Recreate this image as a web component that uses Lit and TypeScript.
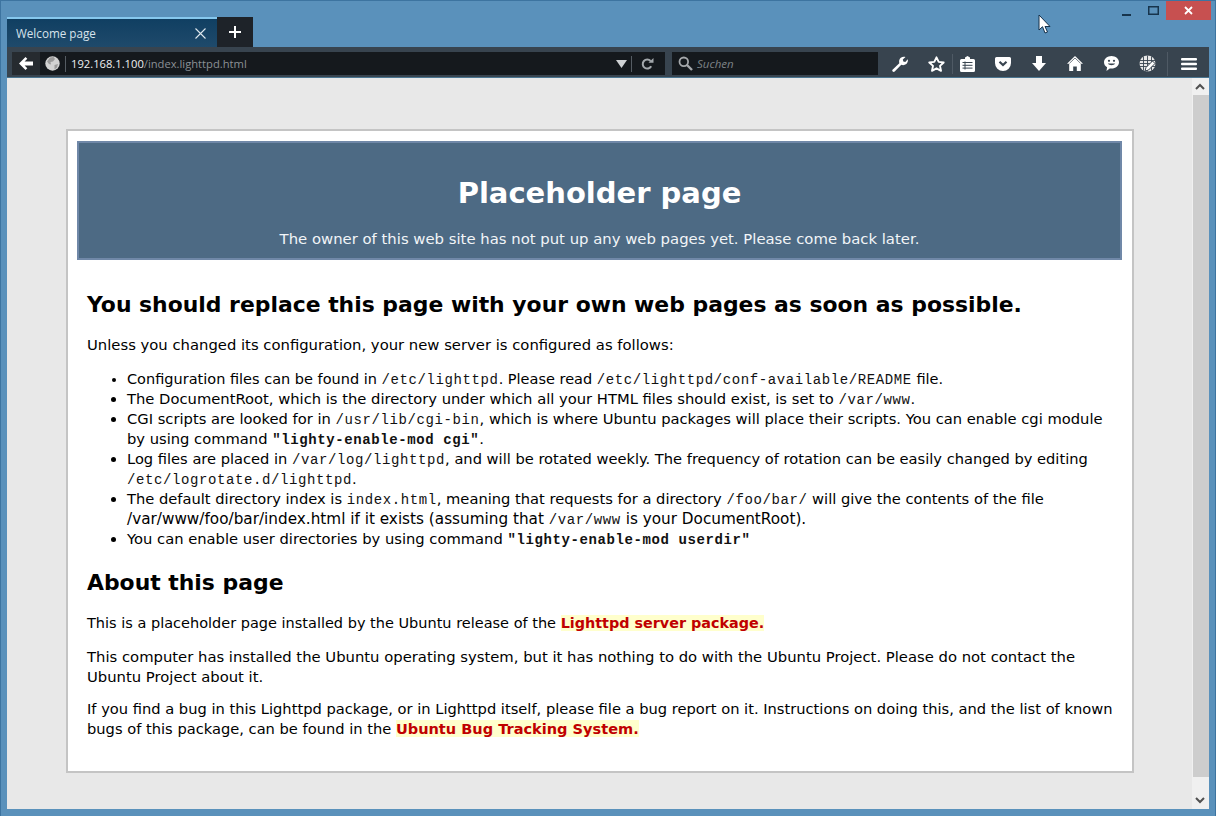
import { LitElement, html, css, svg } from "lit";
import { customElement } from "lit/decorators.js";

const icon = (w: number, h: number, vb: string, body: unknown) =>
  html`<svg width=${w} height=${h} viewBox=${vb}>${body}</svg>`;

@customElement("app-root")
export class AppRoot extends LitElement {
  static styles = css`
    :host { display: block; width: 1216px; height: 816px; overflow: hidden; position: relative; }
    * { box-sizing: border-box; }
    .window { width: 1216px; height: 816px; background: #5a91bb; border: 1px solid #3d74a0; border-width: 1px 1px 0 1px; display: flex; flex-direction: column; padding: 0 6px 7px 6px; position: relative; font-family: "DejaVu Sans", sans-serif; }
    .titlebar { height: 16px; display: flex; justify-content: flex-end; flex: none; margin-right: -2px; }
    .winctl { display: flex; height: 19px; align-items: flex-start; }
    .winbtn { width: 26px; height: 19px; display: flex; align-items: center; justify-content: center; }
    .winbtn.min { width: 27px; padding-top: 7px; }
    .winbtn.close { width: 45px; background: #c75050; }
    .tabs { display: flex; height: 30px; flex: none; }
    .tab { width: 210px; background: linear-gradient(#103f62, #1f4a6b); border-top: 2px solid #86c8ee; display: flex; align-items: center; justify-content: space-between; padding: 0 11px 0 9px; color: #d7e3ec; font: 11.7px "Open Sans", "DejaVu Sans", sans-serif; }
    .newtab { width: 36px; background: #1e2329; display: flex; align-items: center; justify-content: center; }
    .toolbar { height: 31px; flex: none; background: #38444f; display: flex; align-items: center; padding: 3px 0 0 5px; border-bottom: 1px solid #4a7590; }
    .urlbar { width: 653px; height: 23px; background: #15191d; display: flex; align-items: center; flex: none; }
    .back { width: 28px; height: 23px; background: #262b30; display: flex; align-items: center; justify-content: center; }
    .globe { width: 25px; display: flex; align-items: center; justify-content: center; }
    .sep { width: 1px; height: 16px; background: #555c63; flex: none; }
    .url { flex: 1; padding-left: 5px; font: 11.2px "Open Sans", sans-serif; color: #eef0f2; white-space: nowrap; }
    .url span { color: #8b9095; }
    .urlend { display: flex; align-items: center; }
    .drop { width: 20px; display: flex; justify-content: center; }
    .reload { width: 33px; padding-right: 3px; display: flex; justify-content: center; }
    .search { width: 206px; margin-left: 7px; height: 23px; background: #15191d; display: flex; align-items: center; padding-left: 6px; gap: 4px; flex: none; color: #7d8286; font: italic 11.5px "Open Sans", sans-serif; }
    .tools { flex: 1; display: flex; align-items: center; padding-left: 4px; height: 100%; }
    .tool { width: 36px; display: flex; justify-content: center; align-items: center; flex: none; }
    .tool.star { width: 34px; padding-left: 2px; }
    .tool.clip { width: 28px; margin-right: 4px; }
    .tool.menu { width: 41px; }
    .tools .sep { height: 20px; background: #4f5a65; }
    .tools .sep.end { margin-left: 2px; height: 24px; }
    .content { flex: 1; min-height: 0; display: flex; background: #e8e8e8; }
    .page { flex: 1; padding: 51px 0 0 59px; min-width: 0; }
    .scroll { width: 17px; flex: none; background: #f0f0f0; display: flex; flex-direction: column; align-items: center; padding-right: 1px; }
    .sbtn { height: 17px; display: flex; align-items: center; justify-content: center; flex: none; }
    .thumb { flex: 1; width: 100%; background: #cdcdcd; margin-bottom: 15px; margin-left: 1px; }
    .card { width: 1068px; height: 644px; background: #fff; border: 2px solid #c4c4c4; padding: 10px 10px 10px 9px; color: #000; font-size: 14.8px; line-height: 20px; }
    .banner { height: 119px; background: #4d6a84; border: 2px solid #7088a8; text-align: center; color: #fff; padding-top: 32px; }
    .banner h1 { margin: 0; font-size: 29px; line-height: 36px; font-weight: bold; }
    .banner p { margin: 0; padding-top: 18px; color: #f2f5f8; font-size: 14.85px; }
    .main { padding: 0 10px; }
    h2 { margin: 0; font-size: 21.9px; font-weight: bold; line-height: 26px; }
    h2.first { padding-top: 32px; }
    h2.second { padding-top: 21px; }
    p { margin: 0; }
    .lead { padding-top: 17px; }
    ul { margin: 14px 0 0; padding: 0 0 0 40px; }
    .l1 { font-size: 14.5px; }
    .l2 { font-size: 14.74px; }
    .l3 { font-size: 14.71px; }
    .l4 { font-size: 14.65px; }
    .l5 { font-size: 14.68px; }
    .l6 { font-size: 14.72px; }
    .wide { font-size: 15.25px; }
    code { font-family: "Liberation Mono", monospace; font-size: 14px; letter-spacing: 0.6px; line-height: 0; color: #111; }
    code.b { font-weight: bold; }
    a { color: #c00000; font-weight: bold; background: #ffffcc; text-decoration: none; font-size: 14.36px; }
    a.a2 { font-size: 14.55px; }
    .p1 { padding-top: 17px; font-size: 14.5px; }
    .p2 { padding-top: 14px; }
    .p3 { padding-top: 12px; font-size: 14.66px; margin-right: -5px; }
    .cursor { position: absolute; left: 1037px; top: 13px; }
  `;

  render() {
    const w = "#fff";
    const bg = "#38444f";
    return html`<div class="window">
      <div class="titlebar"><div class="winctl">
        <div class="winbtn min">${icon(9, 3, "0 0 9 3", svg`<rect width="9" height="2" y="1" fill="#17344c"/>`)}</div>
        <div class="winbtn">${icon(11, 9, "0 0 11 9", svg`<rect x=".75" y=".75" width="9.5" height="7.5" fill="none" stroke="#17344c" stroke-width="1.5"/>`)}</div>
        <div class="winbtn close">${icon(9, 9, "0 0 9 9", svg`<path d="M1 1l7 7M8 1L1 8" stroke="#fff" stroke-width="1.8"/>`)}</div>
      </div></div>
      <div class="tabs">
        <div class="tab"><span>Welcome page</span>${icon(11, 11, "0 0 11 11", svg`<path d="M.5.5l10 10M10.5.5l-10 10" stroke="#dfe8ee" stroke-width="1.1"/>`)}</div>
        <div class="newtab">${icon(12, 12, "0 0 12 12", svg`<path d="M6 0v12M0 6h12" stroke="#fff" stroke-width="2"/>`)}</div>
      </div>
      <div class="toolbar">
        <div class="urlbar">
          <div class="back">${icon(14, 13, "0 0 14 13", svg`<path d="M6.500 0L0 6.500 6.500 13l1.800-1.800-2.700-2.700H14v-4H5.600l2.700-2.700z" fill="${w}"/>`)}</div>
          <div class="globe">${icon(15, 15, "0 0 15 15", svg`<circle cx="7.500" cy="7.500" r="7.200" fill="#d2d2d2"/><path d="M5 1.500l3.500-.5 1.500 2-2 2.500-2.500.5.500 2.500-2-.5L2 5.500zM9.500 9l3.500-1-1 3.500-2.500 2z" fill="#9a9a9a"/>`)}</div>
          <div class="sep"></div>
          <div class="url">192.168.1.100<span>/index.lighttpd.html</span></div>
          <div class="urlend">
            <div class="drop">${icon(11, 8, "0 0 11 8", svg`<path d="M0 0h11L5.500 8z" fill="#cfd2d4"/>`)}</div>
            <div class="sep"></div>
            <div class="reload">${icon(13, 12, "0 0 13 12", svg`<path d="M10.200 8.200A4.500 4.500 0 1 1 9.600 3" fill="none" stroke="#a3a8ac" stroke-width="2"/><path d="M7.500 4.800h5V0z" fill="#a3a8ac"/>`)}</div>
          </div>
        </div>
        <div class="search">
          ${icon(15, 15, "0 0 15 15", svg`<circle cx="5.800" cy="5.800" r="4.300" fill="none" stroke="#a5a8ab" stroke-width="1.800"/><path d="M9 9l5 5" stroke="#a5a8ab" stroke-width="2.400"/>`)}
          <span>Suchen</span>
        </div>
        <div class="tools">
          <div class="tool">${icon(16, 16, "0 0 16 16", svg`<path d="M.5 13.800L7.300 7.200C6.800 5 7.300 3 8.800 1.800 10.300.6 12 .4 13.500 1L10.800 3.500 11.300 5.500 13.300 6 15.700 3.300C16.200 5 15.700 6.800 14.300 8 12.900 9.200 11 9.500 9.300 8.800L2.700 15.600C2 16.100 1.200 16 .7 15.500.2 15 .1 14.300.5 13.800z" fill="${w}"/>`)}</div>
          <div class="tool star">${icon(17, 16, "0 0 17 16", svg`<path d="M8.500 1.300l2.200 4.600 5 .6-3.700 3.400 1 4.900-4.500-2.500-4.500 2.500 1-4.900L1.300 6.500l5-.6z" fill="none" stroke="${w}" stroke-width="1.900" stroke-linejoin="round"/>`)}</div>
          <div class="sep"></div>
          <div class="tool clip">${icon(15, 16, "0 0 15 16", svg`<path d="M1.500 3H5V1.500L7.500 0 10 1.500V3h3.500A1.500 1.500 0 0 1 15 4.500v10a1.500 1.500 0 0 1-1.500 1.500h-12A1.500 1.500 0 0 1 0 14.500v-10A1.500 1.500 0 0 1 1.500 3z" fill="${w}"/><path d="M2.500 6.500h10M2.500 9.300h10M2.500 12.100h10M5 5.500v8" stroke="${bg}" stroke-width="1"/>`)}</div>
          <div class="tool">${icon(16, 14, "0 0 16 14", svg`<path d="M1.500 0h13A1.500 1.500 0 0 1 16 1.500V6A8 8 0 0 1 0 6V1.500A1.500 1.500 0 0 1 1.500 0z" fill="${w}"/><path d="M4.500 4.800L8 8l3.500-3.200" fill="none" stroke="${bg}" stroke-width="2.200"/>`)}</div>
          <div class="tool">${icon(14, 15, "0 0 14 15", svg`<path d="M4 0h6v7h4l-7 8-7-8h4z" fill="${w}"/>`)}</div>
          <div class="tool">${icon(16, 15, "0 0 16 15", svg`<path d="M8 0l8 7.800h-2.200V15H9.800v-4.500H6.200V15H2.200V7.800H0z" fill="${w}"/><path d="M2.500 7.300L8 2l5.500 5.300" fill="none" stroke="${bg}" stroke-width=".7"/>`)}</div>
          <div class="tool">${icon(15, 15, "0 0 15 15", svg`<path d="M7.500 0C11.600 0 15 2.800 15 6.300s-3.400 6.300-7.500 6.300c-.7 0-1.200 0-1.800-.2L2.500 15l.6-3.700C1.200 10.200 0 8.400 0 6.300 0 2.800 3.400 0 7.500 0z" fill="${w}"/><circle cx="5" cy="4.800" r="1.100" fill="${bg}"/><circle cx="10" cy="4.800" r="1.100" fill="${bg}"/><path d="M3.800 7.500c1.500 2.300 5.900 2.300 7.400 0z" fill="${bg}"/>`)}</div>
          <div class="tool">${icon(17, 17, "0 0 17 17", svg`<circle cx="8.500" cy="8.500" r="8" fill="#e8e8e8"/><path d="M1 5.500h15M.5 8.500h16M1 11.500h15M4.500 1.500v14M8.500.5v16M12.500 1.500v14" stroke="${bg}" stroke-width=".9"/><path d="M6 16l1-3.500 6.500-6.500 2.500 2.500-6.500 6.500z" fill="${w}" stroke="${bg}" stroke-width="1"/>`)}</div>
          <div class="sep end"></div>
          <div class="tool menu">${icon(16, 12, "0 0 16 12", svg`<rect width="16" height="2.600" rx="1" fill="${w}"/><rect y="4.700" width="16" height="2.600" rx="1" fill="${w}"/><rect y="9.400" width="16" height="2.600" rx="1" fill="${w}"/>`)}</div>
        </div>
      </div>
      <div class="content">
        <div class="page"><div class="card">
          <div class="banner">
            <h1>Placeholder page</h1>
            <p>The owner of this web site has not put up any web pages yet. Please come back later.</p>
          </div>
          <div class="main">
            <h2 class="first">You should replace this page with your own web pages as soon as possible.</h2>
            <p class="lead">Unless you changed its configuration, your new server is configured as follows:</p>
            <ul>
              <li class="l1">Configuration files can be found in <code>/etc/lighttpd</code>. Please read <code>/etc/lighttpd/conf-available/README</code> file.</li>
              <li class="l2">The DocumentRoot, which is the directory under which all your HTML files should exist, is set to <code>/var/www</code>.</li>
              <li class="l3">CGI scripts are looked for in <code>/usr/lib/cgi-bin</code>, which is where Ubuntu packages will place their scripts. You can enable cgi module by using command <code class="b">"lighty-enable-mod cgi"</code>.</li>
              <li class="l4">Log files are placed in <code>/var/log/lighttpd</code>, and will be rotated weekly. The frequency of rotation can be easily changed by editing <code>/etc/logrotate.d/lighttpd</code>.</li>
              <li class="l5">The default directory index is <code>index.html</code>, meaning that requests for a directory <code>/foo/bar/</code> will give the contents of the file <span class="wide">/var/www/foo/bar/index.html if it exists (assuming that <code>/var/www</code> is your DocumentRoot).</span></li>
              <li class="l6">You can enable user directories by using command <code class="b">"lighty-enable-mod userdir"</code></li>
            </ul>
            <h2 class="second">About this page</h2>
            <p class="p1">This is a placeholder page installed by the Ubuntu release of the <a>Lighttpd server package.</a></p>
            <p class="p2">This computer has installed the Ubuntu operating system, but it has nothing to do with the Ubuntu Project. Please do not contact the Ubuntu Project about it.</p>
            <p class="p3">If you find a bug in this Lighttpd package, or in Lighttpd itself, please file a bug report on it. Instructions on doing this, and the list of known bugs of this package, can be found in the <a class="a2">Ubuntu Bug Tracking System.</a></p>
          </div>
        </div></div>
        <div class="scroll">
          <div class="sbtn">${icon(10, 7, "0 0 10 7", svg`<path d="M1 6l4-4 4 4" fill="none" stroke="#505050" stroke-width="2"/>`)}</div>
          <div class="thumb"></div>
          <div class="sbtn">${icon(10, 7, "0 0 10 7", svg`<path d="M1 1l4 4 4-4" fill="none" stroke="#505050" stroke-width="2"/>`)}</div>
        </div>
      </div>
      <svg class="cursor" width="14" height="21" viewBox="0 0 14 21"><path d="M1 1v15l3.500-3.300L7 19l2.500-1-2.500-5.500h5z" fill="#fff" stroke="#14304a" stroke-width="1"/></svg>
    </div>`;
  }
}
